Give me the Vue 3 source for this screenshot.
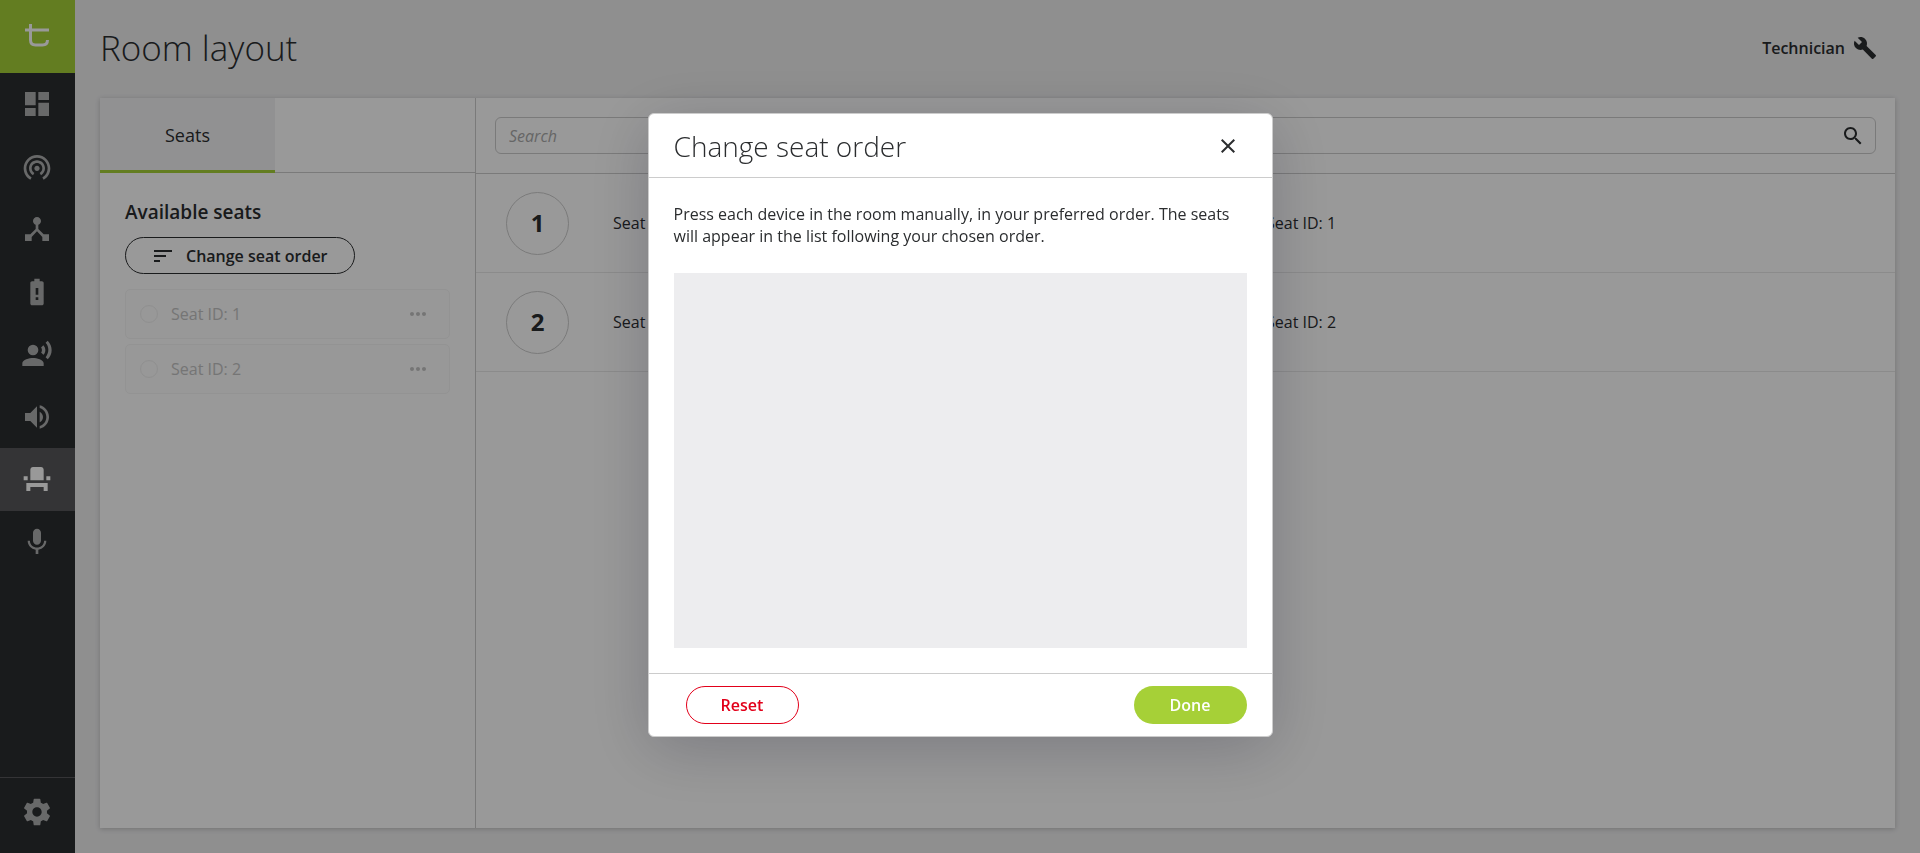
<script setup>
import { ref } from 'vue'

const search = ref('')
const showModal = ref(true)
const activeNav = ref('seats')

const navItems = [
  { id: 'dashboard', label: 'Dashboard', path: 'M3 13h8V3H3v10zm0 8h8v-6H3v6zm10 0h8V11h-8v10zm0-18v6h8V3h-8z' },
  { id: 'wireless', label: 'Wireless', path: 'M12 11c-1.1 0-2 .9-2 2s.9 2 2 2 2-.9 2-2-.9-2-2-2zm6 2c0-3.31-2.69-6-6-6s-6 2.69-6 6c0 2.22 1.21 4.15 3 5.19l1-1.74c-1.19-.7-2-1.97-2-3.45 0-2.21 1.79-4 4-4s4 1.79 4 4c0 1.48-.81 2.75-2 3.45l1 1.74c1.79-1.04 3-2.97 3-5.19zM12 3C6.48 3 2 7.48 2 13c0 3.7 2.01 6.92 4.99 8.65l1-1.73C5.61 18.53 4 15.96 4 13c0-4.42 3.58-8 8-8s8 3.58 8 8c0 2.96-1.61 5.53-4 6.92l1 1.73c2.99-1.73 5-4.95 5-8.65 0-5.52-4.48-10-10-10z' },
  { id: 'devices', label: 'Devices', path: 'M17 16l-4-4V8.82C14.16 8.4 15 7.3 15 6c0-1.66-1.34-3-3-3S9 4.34 9 6c0 1.3.84 2.4 2 2.82V12l-4 4H3v5h5v-3.05l4-4.2 4 4.2V21h5v-5h-4z' },
  { id: 'battery', label: 'Battery', path: 'M15.67 4H14V2h-4v2H8.33C7.6 4 7 4.6 7 5.33v15.33C7 21.4 7.6 22 8.33 22h7.33c.74 0 1.34-.6 1.34-1.33V5.33C17 4.6 16.4 4 15.67 4zM13 18h-2v-2h2v2zm0-4h-2V9h2v5z' },
  { id: 'speakers', label: 'Speakers', path: 'M9 5a4 4 0 1 0 0 8 4 4 0 1 0 0-8zM9 15c-2.67 0-8 1.34-8 4v2h16v-2c0-2.66-5.33-4-8-4zm7.76-9.64l-1.68 1.69c.84 1.18.84 2.71 0 3.89l1.68 1.69c2.02-2.02 2.02-5.07 0-7.27zM20.07 2l-1.63 1.63c2.77 3.02 2.77 7.56 0 10.74L20.07 16c3.9-3.89 3.91-9.95 0-14z' },
  { id: 'audio', label: 'Audio', path: 'M3 9v6h4l5 5V4L7 9H3zm13.5 3c0-1.77-1.02-3.29-2.5-4.03v8.05c1.48-.73 2.5-2.25 2.5-4.02zM14 3.23v2.06c2.89.86 5 3.54 5 6.71s-2.11 5.85-5 6.71v2.06c4.01-.91 7-4.49 7-8.77s-2.99-7.86-7-8.77z' },
  { id: 'seats', label: 'Room layout', path: 'M4 18v3h3v-3h10v3h3v-6H4zm15-8h3v3h-3zM2 10h3v3H2zm15 3H7V5c0-1.1.9-2 2-2h6c1.1 0 2 .9 2 2v8z' },
  { id: 'microphone', label: 'Microphone', path: 'M12 14c1.66 0 2.99-1.34 2.99-3L15 5c0-1.66-1.34-3-3-3S9 3.34 9 5v6c0 1.66 1.34 3 3 3zm5.3-3c0 3-2.54 5.1-5.3 5.1S6.7 14 6.7 11H5c0 3.41 2.72 6.23 6 6.72V21h2v-3.28c3.28-.48 6-3.3 6-6.72h-1.7z' }
]

const seats = [
  { number: 1, name: 'Seat 1', label: 'Seat ID: 1' },
  { number: 2, name: 'Seat 2', label: 'Seat ID: 2' }
]
</script>

<template>
  <div class="app">
    <nav class="sidebar">
      <a href="#" class="logo" aria-label="Home">
        <svg viewBox="0 0 24 24" width="24" height="24">
          <path d="M0 6h24M5.500 0v16q0 5 5 5h7q5 0 5-5" />
        </svg>
      </a>
      <div class="nav-list">
        <a
          v-for="item in navItems"
          :key="item.id"
          href="#"
          class="nav-item"
          :class="{ active: activeNav === item.id }"
          :aria-label="item.label"
          @click.prevent="activeNav = item.id"
        >
          <svg class="icon-lg" viewBox="0 0 24 24"><path :d="item.path" /></svg>
        </a>
      </div>
      <a href="#" class="nav-item settings" aria-label="Settings">
        <svg class="icon-lg" viewBox="0 0 24 24"><path d="M19.43 12.98c.04-.32.07-.64.07-.98s-.03-.66-.07-.98l2.11-1.65c.19-.15.24-.42.12-.64l-2-3.46c-.12-.22-.39-.3-.61-.22l-2.49 1c-.52-.4-1.08-.73-1.69-.98l-.38-2.65C14.46 2.18 14.25 2 14 2h-4c-.25 0-.46.18-.49.42l-.38 2.65c-.61.25-1.17.59-1.69.98l-2.49-1c-.23-.09-.49 0-.61.22l-2 3.46c-.13.22-.07.49.12.64l2.11 1.65c-.04.32-.07.65-.07.98s.03.66.07.98l-2.11 1.65c-.19.15-.24.42-.12.64l2 3.46c.12.22.39.3.61.22l2.49-1c.52.4 1.08.73 1.69.98l.38 2.65c.03.24.24.42.49.42h4c.25 0 .46-.18.49-.42l.38-2.65c.61-.25 1.17-.59 1.69-.98l2.49 1c.23.09.49 0 .61-.22l2-3.46c.12-.22.07-.49-.12-.64l-2.11-1.65zM12 15.5c-1.93 0-3.5-1.57-3.5-3.5s1.57-3.5 3.5-3.5 3.5 1.57 3.5 3.5-1.57 3.5-3.5 3.5z" /></svg>
      </a>
    </nav>

    <main class="main">
      <header class="page-header">
        <h1>Room layout</h1>
        <button type="button" class="role">
          Technician
          <svg class="icon" viewBox="0 0 24 24"><path d="M22.7 19l-9.1-9.1c.9-2.3.4-5-1.5-6.9-2-2-5-2.4-7.4-1.3L9 6 6 9 1.6 4.7C.4 7.1.9 10.1 2.9 12.1c1.9 1.9 4.6 2.4 6.9 1.5l9.1 9.1c.4.4 1 .4 1.4 0l2.3-2.3c.5-.4.5-1.1.1-1.4z" /></svg>
        </button>
      </header>

      <section class="panel">
        <aside class="side">
          <div class="tabs">
            <button type="button" class="tab">Seats</button>
          </div>
          <div class="side-body">
            <h2>Available seats</h2>
            <button type="button" class="btn btn-order" @click="showModal = true">
              <svg class="icon" viewBox="0 0 24 24"><path d="M3 18h6v-2H3v2zM3 6v2h18V6H3zm0 7h12v-2H3v2z" /></svg>
              Change seat order
            </button>
            <ul class="seat-cards">
              <li v-for="seat in seats" :key="seat.number" class="seat-card">
                <span class="dot"></span>
                <span class="seat-label">{{ seat.label }}</span>
                <svg class="icon" viewBox="0 0 24 24"><path d="M6 10c-1.1 0-2 .9-2 2s.9 2 2 2 2-.9 2-2-.9-2-2-2zm12 0c-1.1 0-2 .9-2 2s.9 2 2 2 2-.9 2-2-.9-2-2-2zm-6 0c-1.1 0-2 .9-2 2s.9 2 2 2 2-.9 2-2-.9-2-2-2z" /></svg>
              </li>
            </ul>
          </div>
        </aside>

        <div class="content">
          <div class="toolbar">
            <label class="search">
              <input v-model="search" type="text" placeholder="Search" aria-label="Search">
              <svg class="icon" viewBox="0 0 24 24"><path d="M15.5 14h-.79l-.28-.27C15.41 12.59 16 11.11 16 9.5 16 5.91 13.09 3 9.5 3S3 5.91 3 9.5 5.91 16 9.5 16c1.61 0 3.09-.59 4.23-1.57l.27.28v.79l5 4.99L20.49 19l-4.99-5zm-6 0C7.01 14 5 11.99 5 9.5S7.01 5 9.5 5 14 7.01 14 9.5 11.99 14 9.5 14z" /></svg>
            </label>
          </div>
          <div v-for="seat in seats" :key="seat.number" class="seat-row">
            <span class="seat-number">{{ seat.number }}</span>
            <span>{{ seat.name }}</span>
            <span>{{ seat.label }}</span>
          </div>
        </div>
      </section>
    </main>

    <div v-if="showModal" class="overlay">
      <div class="modal" role="dialog" aria-labelledby="modal-title">
        <header class="modal-header">
          <h2 id="modal-title">Change seat order</h2>
          <button type="button" class="close" aria-label="Close" @click="showModal = false">
            <svg class="icon" viewBox="0 0 24 24"><path d="M19 6.41L17.59 5 12 10.59 6.41 5 5 6.41 10.59 12 5 17.59 6.41 19 12 13.41 17.59 19 19 17.59 13.41 12z" /></svg>
          </button>
        </header>
        <div class="modal-body">
          <p>Press each device in the room manually, in your preferred order. The seats will appear in the list following your chosen order.</p>
          <div class="order-list"></div>
        </div>
        <footer class="modal-footer">
          <button type="button" class="btn btn-reset">Reset</button>
          <button type="button" class="btn btn-done" @click="showModal = false">Done</button>
        </footer>
      </div>
    </div>
  </div>
</template>

<style>
body {
  margin: 0;
}
</style>

<style scoped>
.app {
  display: flex;
  height: 100vh;
  background: #eeeeef;
  color: #2b2d2f;
  font-family: "Open Sans", "Noto Sans", sans-serif;
  font-size: 16px;
  line-height: 22px;
}

.app *,
.app {
  box-sizing: border-box;
}

button {
  font: inherit;
  color: inherit;
  background: none;
  border: none;
  padding: 0;
  cursor: pointer;
}

h1,
h2,
p,
ul {
  margin: 0;
  padding: 0;
}

svg {
  display: block;
  flex-shrink: 0;
  fill: currentColor;
}

.icon {
  width: 24px;
  height: 24px;
}

.icon-lg {
  width: 32px;
  height: 32px;
}

/* sidebar */
.sidebar {
  display: flex;
  flex-direction: column;
  flex-shrink: 0;
  width: 75px;
  background: #2b2d2f;
}

.logo {
  display: flex;
  align-items: center;
  justify-content: center;
  height: 73px;
  padding: 0 1px 2px 0;
  background: #a6d037;
}

.logo svg {
  fill: none;
  stroke: #fff;
  stroke-width: 3;
}

.nav-list {
  display: flex;
  flex-direction: column;
  height: 500px;
}

.nav-item {
  display: flex;
  flex: 1;
  align-items: center;
  justify-content: center;
  padding-right: 1px;
  color: #aeb0b0;
}

.nav-item.active {
  background: #57585a;
  color: #fff;
}

.nav-item.settings {
  flex: none;
  height: 76px;
  margin-top: auto;
  padding-bottom: 8px;
  border-top: 1px solid #57585a;
}

/* page */
.main {
  display: flex;
  flex: 1;
  flex-direction: column;
  min-width: 0;
  padding: 0 25px 25px;
}

.page-header {
  display: flex;
  align-items: center;
  justify-content: space-between;
  height: 98px;
  padding: 0 18px 2px 0;
}

h1 {
  font-size: 35px;
  font-weight: 300;
  line-height: 48px;
}

.role {
  display: flex;
  align-items: center;
  gap: 8px;
  font-weight: 600;
}

.panel {
  display: flex;
  flex: 1;
  background: #fff;
  box-shadow: 0 1px 5px rgba(0, 0, 0, .2);
}

.side {
  width: 376px;
  flex-shrink: 0;
  border-right: 1px solid #ccc;
}

.tabs {
  display: flex;
  height: 75px;
  border-bottom: 1px solid #ccc;
}

.tab {
  width: 175px;
  height: 75px;
  padding-top: 2px;
  background: #f2f2f3;
  border-bottom: 3px solid #a6d037;
  font-size: 18px;
}

.side-body {
  padding: 27px 25px;
}

.side-body h2 {
  font-size: 19px;
  font-weight: 600;
  line-height: 24px;
}

.btn {
  display: inline-flex;
  align-items: center;
  justify-content: center;
  height: 38px;
  border: 1px solid transparent;
  border-radius: 19px;
  font-weight: 600;
}

.btn-order {
  gap: 11px;
  height: 37px;
  margin: 13px 0 15px;
  padding: 0 26px 0 25px;
  border-color: #2b2d2f;
}

.seat-cards {
  display: flex;
  flex-direction: column;
  gap: 5px;
  list-style: none;
}

.seat-card {
  display: flex;
  align-items: center;
  height: 50px;
  padding: 0 19px 0 14px;
  background: #fdfdfd;
  border: 1px solid #f5f5f5;
  border-radius: 5px;
  color: #c4c4c4;
}

.dot {
  width: 18px;
  height: 18px;
  margin-right: 13px;
  border: 1px solid #f0f0f0;
  border-radius: 50%;
}

.seat-label {
  flex: 1;
}

.content {
  flex: 1;
  min-width: 0;
}

.toolbar {
  padding: 19px;
  border-bottom: 1px solid #ccc;
}

.search {
  display: flex;
  align-items: center;
  height: 37px;
  padding: 0 10px 0 13px;
  border: 1px solid #ccc;
  border-radius: 6px;
}

.search input {
  flex: 1;
  min-width: 0;
  padding: 0;
  border: none;
  outline: none;
  background: none;
  color: inherit;
  font: inherit;
}

.search input::placeholder {
  color: #aaa;
  font-style: italic;
}

.seat-row {
  display: grid;
  grid-template-columns: 83px 1fr 1fr;
  gap: 24px;
  align-items: center;
  height: 99px;
  padding-left: 30px;
  border-bottom: 1px solid #e8e8e8;
}

.seat-number {
  display: flex;
  align-items: center;
  justify-content: center;
  width: 63px;
  height: 63px;
  border: 1px solid #ccc;
  border-radius: 50%;
  font-size: 24px;
  font-weight: 700;
}

/* modal */
.overlay {
  position: fixed;
  inset: 0;
  display: flex;
  align-items: center;
  justify-content: center;
  padding-bottom: 3px;
  background: rgba(0, 0, 0, .4);
}

.modal {
  width: 625px;
  background: #fff;
  border: 1px solid #ccc;
  border-radius: 6px;
  box-shadow: 0 12px 64px rgba(0, 0, 30, .2);
}

.modal-header {
  display: flex;
  align-items: center;
  justify-content: space-between;
  height: 64px;
  padding: 0 32px 0 25px;
  border-bottom: 1px solid #ccc;
}

.modal-header h2 {
  font-size: 28px;
  font-weight: 300;
  line-height: 38px;
}

.modal-body {
  padding: 25px;
}

.order-list {
  height: 375px;
  margin-top: 26px;
  background: #ededef;
}

.modal-footer {
  display: flex;
  align-items: center;
  justify-content: space-between;
  padding: 12px 25px 12px 37px;
  border-top: 1px solid #ccc;
}

.btn-reset,
.btn-done {
  min-width: 113px;
}

.btn-reset {
  border-color: #e2001a;
  color: #e2001a;
}

.btn-done {
  background: #a6d037;
  color: #fff;
}
</style>
